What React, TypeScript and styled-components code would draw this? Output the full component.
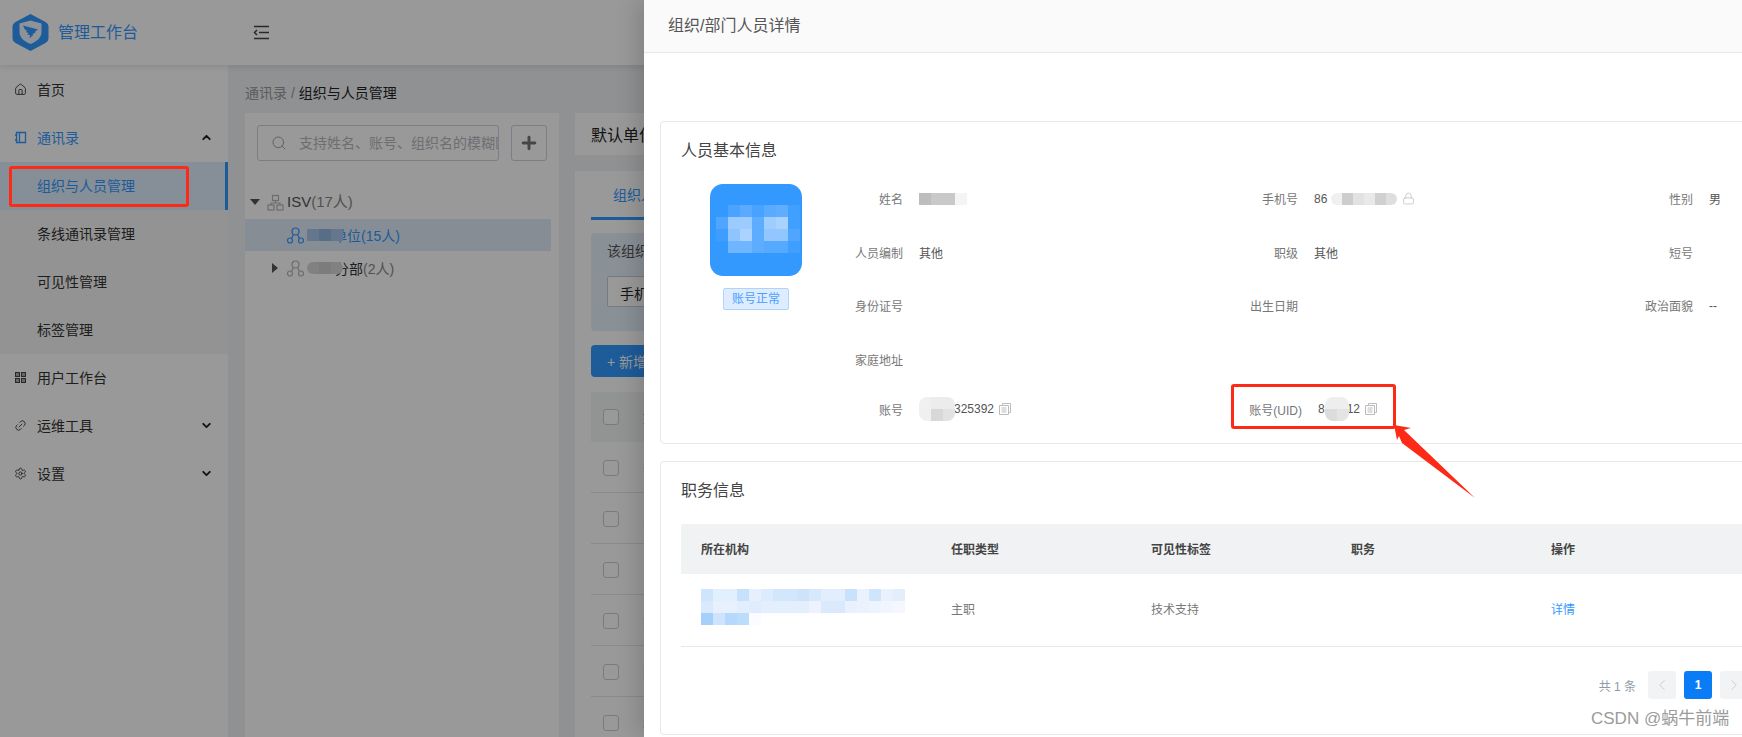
import React from 'react';
import styled, {createGlobalStyle} from 'styled-components';
import {ChevronDown, ChevronLeft, ChevronRight, ChevronUp, House, Link2, Lock, Plus, Search, Settings} from 'lucide-react';

const GlobalStyle = createGlobalStyle`
  html, body {
    margin: 0;
    padding: 0;
    background: #fff;
  }
  * {
    box-sizing: border-box;
  }
  body {
    font-family: "Liberation Sans", "Noto Sans CJK SC", sans-serif;
  }
`;

const BLUE = '#3399ff';

const Shot = styled.div`
  position: relative;
  width: 1742px;
  height: 737px;
  overflow: hidden;
  background: #fff;
`;

/* ---------- page behind the drawer ---------- */

const Page = styled.div`
  display: flex;
  flex-direction: column;
  height: 100%;
`;

const TopBar = styled.header`
  display: flex;
  align-items: center;
  flex: 0 0 65px;
  box-shadow: 0 2px 6px rgba(0, 0, 0, 0.1);
  background: #fff;
  position: relative;
  z-index: 1;
`;

const Brand = styled.div`
  display: flex;
  align-items: center;
  gap: 9px;
  width: 253px;
  padding-left: 12px;
  font-size: 16px;
  color: ${BLUE};
`;

const BrandName = styled.span`
  padding-bottom: 3px;
`;

const Shell = styled.div`
  display: flex;
  flex: 1;
  min-height: 0;
`;

const Side = styled.nav`
  width: 228px;
  flex: none;
  padding-top: 1px;
  background: #fff;
`;

const SubMenu = styled.div`
  background: #f6f6f6;
`;

const MenuItem = styled.div<{$active?: boolean; $sub?: boolean; $open?: boolean}>`
  display: flex;
  align-items: center;
  height: 48px;
  padding: 0 0 2px ${p => (p.$sub ? '37px' : '14px')};
  gap: 10px;
  font-size: 14px;
  color: ${p => (p.$active || p.$open ? BLUE : '#333')};
  background: ${p => (p.$active ? '#dfeefc' : 'transparent')};
  border-right: ${p => (p.$active ? `3px solid ${BLUE}` : '0')};
`;

const Caret = styled.span`
  margin-left: auto;
  margin-right: 15px;
  display: flex;
  color: #222;
`;

const Main = styled.main`
  flex: 1;
  min-width: 0;
  background: #f0f2f5;
  padding: 0 0 0 17px;
  display: flex;
  flex-direction: column;
`;

const Crumb = styled.div`
  flex: 0 0 48px;
  display: flex;
  align-items: center;
  padding-top: 6px;
  font-size: 14px;
  color: #999;

  b {
    font-weight: 400;
    color: #222;
  }
`;

const Columns = styled.div`
  flex: 1;
  display: flex;
  gap: 16px;
`;

const TreePanel = styled.section`
  width: 314px;
  flex: none;
  background: #fff;
`;

const SearchRow = styled.div`
  display: flex;
  gap: 12px;
  padding: 12px 12px 25px;
`;

const SearchBox = styled.div`
  display: flex;
  align-items: center;
  gap: 12px;
  width: 242px;
  height: 36px;
  padding-left: 13px;
  border: 1px solid #cfd3da;
  border-radius: 3px;
  overflow: hidden;
  color: #9aa5b1;
`;

const SearchInput = styled.input`
  flex: 1;
  min-width: 0;
  border: 0;
  padding: 0;
  outline: 0;
  background: transparent;
  font: 14px "Liberation Sans", "Noto Sans CJK SC", sans-serif;

  &::placeholder {
    color: #b5b9bf;
  }
`;

const AddButton = styled.div`
  display: flex;
  align-items: center;
  justify-content: center;
  width: 36px;
  height: 36px;
  border: 1px solid #cfd3da;
  border-radius: 3px;
  color: #777;
`;

const Tree = styled.div`
  display: flex;
  flex-direction: column;
  gap: 1px;
  padding-right: 8px;
`;

const TreeRow = styled.div<{$indent: number; $selected?: boolean}>`
  display: flex;
  align-items: center;
  height: 32px;
  padding-left: ${p => p.$indent}px;
  font-size: ${p => (p.$indent < 10 ? '15px' : '14px')};
  color: ${p => (p.$selected ? BLUE : p.$indent < 10 ? '#555' : '#333')};
  background: ${p => (p.$selected ? '#e0ebf9' : 'transparent')};

  em {
    font-style: normal;
    color: ${p => (p.$selected ? BLUE : '#888')};
  }
`;

const RootLabel = styled.span`
  padding-bottom: 3px;
`;

const Triangle = styled.span<{$open?: boolean}>`
  width: 0;
  height: 0;
  flex: none;
  ${p =>
    p.$open
      ? `border-left: 5px solid transparent; border-right: 5px solid transparent; border-top: 6px solid #555; margin: 0 7px 1px 0;`
      : `border-top: 5px solid transparent; border-bottom: 5px solid transparent; border-left: 6px solid #555; margin-right: 9px;`}
`;

const TreeIcon = styled.svg<{$on?: boolean}>`
  width: 17px;
  height: 17px;
  flex: none;
  margin-right: 3px;
  fill: none;
  stroke: ${p => (p.$on ? BLUE : '#b5b5b5')};
  stroke-width: 1.2;
`;

const RightColumn = styled.div`
  flex: 1;
  display: flex;
  flex-direction: column;
  gap: 16px;
  min-width: 0;
`;

const TitleCard = styled.div`
  height: 42px;
  display: flex;
  align-items: center;
  padding-left: 16px;
  font-size: 16px;
  color: #222;
  background: #fff;
`;

const ListCard = styled.div`
  flex: 1;
  padding: 0 0 0 16px;
  background: #fff;
`;

const Tabs = styled.div`
  height: 49px;
  border-bottom: 0;
`;

const Tab = styled.div`
  width: 100px;
  height: 49px;
  padding-top: 13px;
  text-align: center;
  font-size: 14px;
  color: ${BLUE};
  border-bottom: 3px solid ${BLUE};
  white-space: nowrap;
`;

const Notice = styled.div`
  margin-top: 13px;
  height: 98px;
  padding: 7px 16px;
  border-radius: 4px;
  background: #e4f0fb;
  font-size: 14px;
  color: #555;
  white-space: nowrap;
`;

const PhoneSelect = styled.div`
  margin-top: 16px;
  width: 120px;
  height: 31px;
  padding: 6px 12px;
  border: 1px solid #c9ccd1;
  border-radius: 2px;
  background: #fff;
  color: #222;
`;

const PrimaryButton = styled.div`
  display: flex;
  align-items: center;
  margin-top: 14px;
  width: 120px;
  height: 32px;
  padding-left: 16px;
  border-radius: 4px;
  background: ${BLUE};
  color: #fff;
  font-size: 14px;
  white-space: nowrap;
`;

const ListRow = styled.div<{$head?: boolean}>`
  display: flex;
  align-items: center;
  height: ${p => (p.$head ? '50px' : '51px')};
  margin-top: ${p => (p.$head ? '15px' : '0')};
  padding: ${p => (p.$head ? '0' : '2px')} 0 0 12px;
  gap: 24px;
  font-size: 14px;
  white-space: nowrap;
  color: ${p => (p.$head ? '#333' : BLUE)};
  background: ${p => (p.$head ? '#f4f5f6' : 'transparent')};
  border-bottom: ${p => (p.$head ? '0' : '1px solid #e6e8eb')};
`;

const Check = styled.span`
  width: 16px;
  height: 16px;
  flex: none;
  border: 1px solid #c9cdd4;
  border-radius: 3px;
  background: #fff;
`;

const Scrim = styled.div`
  position: absolute;
  inset: 0;
  z-index: 2;
  background: rgba(0, 0, 0, 0.4);
`;

/* ---------- drawer ---------- */

const Drawer = styled.aside`
  position: absolute;
  z-index: 3;
  top: 0;
  bottom: 0;
  left: 644px;
  width: 1098px;
  overflow: hidden;
  background: #fff;
  box-shadow: -6px 0 22px rgba(0, 0, 0, 0.16);
  color: #555;
`;

const DrawerHead = styled.div`
  display: flex;
  align-items: center;
  height: 53px;
  padding: 0 0 4px 24px;
  background: #fafafa;
  border-bottom: 1px solid #e8e8e8;
  font-size: 16px;
  color: #555;
`;

const DrawerBody = styled.div`
  display: flex;
  flex-direction: column;
  gap: 17px;
  width: 1108px;
  padding: 68px 0 0 16px;
`;

const Card = styled.section<{$h: number}>`
  width: 1092px;
  height: ${p => p.$h}px;
  padding: 20px 0 0 20px;
  border: 1px solid #e8e8e8;
  border-radius: 4px;
`;

const CardTitle = styled.h3`
  margin: 0;
  font-size: 16px;
  line-height: 18px;
  font-weight: 400;
  color: #444;
`;

const Profile = styled.div`
  display: flex;
  margin-top: 24px;
`;

const AvatarColumn = styled.div`
  display: flex;
  flex-direction: column;
  align-items: center;
  flex: none;
  width: 150px;
`;

const Avatar = styled.svg`
  width: 92px;
  height: 92px;
  display: block;
`;

const StatusTag = styled.span`
  margin-top: 12px;
  width: 66px;
  height: 22px;
  line-height: 20px;
  text-align: center;
  font-size: 12px;
  color: #4ba0ff;
  background: #deecff;
  border: 1px solid #aed4fb;
  border-radius: 2px;
`;

const Fields = styled.div`
  display: grid;
  flex: none;
  grid-template-columns: repeat(3, 395px);
  grid-template-rows: repeat(4, 53.5px) 46px;
  margin-top: -12px;
`;

const Field = styled.div`
  display: flex;
  align-items: center;
  font-size: 12px;
  color: #555;
`;

const Label = styled.span<{$shift?: number}>`
  width: ${p => 72 + (p.$shift || 0)}px;
  flex: none;
  text-align: right;
  color: #777;
  margin-right: 16px;
  white-space: nowrap;
`;

const Mosaic = styled.span<{$cols: number; $round?: boolean; $cell?: number}>`
  display: inline-grid;
  grid-template-columns: repeat(${p => p.$cols}, ${p => p.$cell || 12}px);
  grid-auto-rows: 12px;
  flex: none;
  overflow: hidden;
  border-radius: ${p => (p.$round ? '8px' : '0')};
`;

/* a blur that sits on top of the first characters following it */
const OverBlur = styled(Mosaic)<{$over: number}>`
  position: relative;
  z-index: 1;
  margin-right: -${p => p.$over}px;
`;

const OrgBlur = styled(Mosaic)`
  align-self: start;
  margin-top: 15px;
`;

const Cell = styled.span<{$c: string}>`
  background: ${p => p.$c};
`;

const CopyIcon = styled.svg`
  width: 12px;
  height: 12px;
  margin-left: 5px;
  flex: none;
  fill: none;
  stroke: #bcbcbc;
  stroke-width: 1;
`;

const Gap = styled.span`
  display: inline-block;
  width: 4px;
`;

const LockMark = styled.span`
  display: flex;
  margin-left: 5px;
  color: #c4c4c4;
`;

const JobTable = styled.div`
  margin-top: 24px;
  width: 1067px;
`;

const JobRow = styled.div<{$head?: boolean}>`
  display: grid;
  grid-template-columns: 250px 200px 200px 200px 1fr;
  align-items: center;
  height: ${p => (p.$head ? '50px' : '73px')};
  padding: 0 0 ${p => (p.$head ? '2px' : '3px')} 20px;
  font-size: 12px;
  font-weight: ${p => (p.$head ? 700 : 400)};
  color: ${p => (p.$head ? '#444' : '#777')};
  background: ${p => (p.$head ? '#f1f2f4' : '#fff')};
  border-bottom: ${p => (p.$head ? '0' : '1px solid #e8e8e8')};
  border-radius: ${p => (p.$head ? '2px 2px 0 0' : '0')};
`;

const Link = styled.span`
  color: ${BLUE};
`;

const Pager = styled.div`
  display: flex;
  align-items: center;
  justify-content: flex-end;
  gap: 8px;
  width: 1067px;
  margin-top: 24px;
  font-size: 12px;
  color: #8f99a8;
`;

const PagerTotal = styled.span`
  margin-right: 4px;
`;

const PageButton = styled.div<{$on?: boolean}>`
  display: flex;
  align-items: center;
  justify-content: center;
  width: 28px;
  height: 28px;
  border-radius: 3px;
  font-weight: 700;
  background: ${p => (p.$on ? '#0a7cf6' : '#f1f3f5')};
  color: ${p => (p.$on ? '#fff' : '#bcc3cd')};
`;

/* ---------- annotations on top of the screenshot ---------- */

const RedBox = styled.div<{$x: number; $y: number; $w: number; $h: number}>`
  position: absolute;
  z-index: 4;
  left: ${p => p.$x}px;
  top: ${p => p.$y}px;
  width: ${p => p.$w}px;
  height: ${p => p.$h}px;
  border: 3px solid #fc2a17;
  border-radius: 3px;
`;

const Arrow = styled.svg`
  position: absolute;
  z-index: 4;
  left: 1385px;
  top: 420px;
  width: 100px;
  height: 85px;
`;

const Watermark = styled.div`
  position: absolute;
  z-index: 4;
  left: 1591px;
  top: 709px;
  font-size: 17px;
  line-height: 20px;
  color: #9b9b9b;
  white-space: nowrap;
`;

const Logo = () => (
  <svg width="37" height="37" viewBox="0 0 37 37">
    <path d="M18.5 0 33.500 8q3 1.600 3 4.500v12q0 2.900-3 4.500l-15 8-15-8q-3-1.600-3-4.500v-12Q.5 9.600 3.500 8Z" fill="#3399ff" />
    <path d="M18.500 6.500 29.500 9.500v8.500c0 5.500-4.500 9.500-11 12-6.500-2.500-11-6.500-11-12V9.500Z" fill="#fff" opacity=".9" />
    <path d="M11 11.500 26 15.500l-3 2 1 .6-3.500 2.200.8.8-4 3.400 1-3.300-3.200-.6 1.600-1.600-3-1 1.500-1.300-2.400-1.200Z" fill="#3399ff" />
  </svg>
);

const Collapse = () => (
  <svg width="17" height="15" viewBox="0 0 17 15" fill="none" stroke="#444" strokeWidth="1.500">
    <path d="M1 1.500h15M6 7.500h10M1 13.500h15M4 5 1.500 7.500 4 10" />
  </svg>
);

const Contacts = () => (
  <svg width="13" height="13" viewBox="0 0 13 13" fill="none" stroke="#3399ff" strokeWidth="1.300">
    <path d="M2.500 1.500h9v10h-9zM5.500 1.500v10M1 4h2.500M1 9h2.500" />
  </svg>
);

const Apps = () => (
  <svg width="13" height="13" viewBox="0 0 13 13" fill="#aaa" stroke="#444" strokeWidth="1">
    <rect x="1.500" y="1.500" width="4" height="4" />
    <rect x="7.500" y="1.500" width="4" height="4" />
    <rect x="1.500" y="7.500" width="4" height="4" />
    <rect x="7.500" y="7.500" width="4" height="4" />
  </svg>
);

const OrgIcon = () => (
  <TreeIcon viewBox="0 0 17 17">
    <rect x="5.500" y="1.500" width="6" height="5" />
    <rect x="1" y="11" width="6" height="5" />
    <rect x="10" y="11" width="6" height="5" />
    <path d="M8.500 6.500v2.500M4 11V9h9v2" />
  </TreeIcon>
);

const NodeIcon = ({on}: {on?: boolean}) => (
  <TreeIcon viewBox="0 0 17 17" $on={on}>
    <circle cx="8.500" cy="4.500" r="3.500" />
    <circle cx="3" cy="13.500" r="2.500" />
    <circle cx="14" cy="13.500" r="2.500" />
    <path d="M6.500 7.500 4.500 11.500M10.500 7.500l2 4" />
  </TreeIcon>
);

const Copy = () => (
  <CopyIcon viewBox="0 0 12 12">
    <path d="M3.500 2.500V.5h8v9h-2M.5 2.500h9v9h-9zM2.500 5h5M2.500 7h5M2.500 9h5" />
  </CopyIcon>
);

const avatarCells = [
  ['#3399ff', '#4aa3ff', '#5aabff', '#48a2ff', '#5aabff', '#5fadff', '#3fa0ff'],
  ['#50a6ff', '#9ccbff', '#9ccbff', '#5dadff', '#9fcdff', '#aad2ff', '#40a0ff'],
  ['#3d9eff', '#8fc4ff', '#aad3ff', '#5dadff', '#92c6ff', '#92c6ff', '#50a6ff'],
  ['#3399ff', '#70b5ff', '#70b5ff', '#5dadff', '#55a9ff', '#55a9ff', '#3f9fff'],
];

const orgCells = [
  ['#cfe5fc', '#e2effd', '#e2effd', '#c6e1fb', '#e6f0fd', '#dcebfd', '#d2e6fc', '#d2e6fc', '#cde3fc', '#d6e8fc', '#e2eefd', '#e2eefd', '#c8e2fc', '#e9f2fe', '#cfe5fc', '#eaf1fe', '#e3eefd'],
  ['#dbe9fc', '#e8f0fd', '#e8f0fd', '#e2edfd', '#e0ecfd', '#e4effd', '#e4effd', '#e4effd', '#e4effd', '#edf2fe', '#dbe9fc', '#dbe9fc', '#e9f1fe', '#eaf2fe', '#eef4fe', '#f0f5fe', '#f4f7fe'],
  ['#a5d0fb', '#cfe4fc', '#b5d8fc', '#bcdcfc', '#fbfcff'],
];

const App: React.FC = () => {
  return (
    <Shot>
      <GlobalStyle />
      <Page>
        <TopBar>
          <Brand>
            <Logo />
            <BrandName>管理工作台</BrandName>
          </Brand>
          <Collapse />
        </TopBar>
        <Shell>
          <Side>
            <MenuItem>
              <House size={13} strokeWidth={1.6} />
              首页
            </MenuItem>
            <MenuItem $open>
              <Contacts />
              通讯录
              <Caret>
                <ChevronUp size={13} strokeWidth={3.500} />
              </Caret>
            </MenuItem>
            <SubMenu>
              <MenuItem $sub $active>组织与人员管理</MenuItem>
              <MenuItem $sub>条线通讯录管理</MenuItem>
              <MenuItem $sub>可见性管理</MenuItem>
              <MenuItem $sub>标签管理</MenuItem>
            </SubMenu>
            <MenuItem>
              <Apps />
              用户工作台
            </MenuItem>
            <MenuItem>
              <Link2 size={13} strokeWidth={1.500} style={{transform: 'rotate(-45deg)'}} />
              运维工具
              <Caret>
                <ChevronDown size={13} strokeWidth={3.500} />
              </Caret>
            </MenuItem>
            <MenuItem>
              <Settings size={13} strokeWidth={1.600} />
              设置
              <Caret>
                <ChevronDown size={13} strokeWidth={3.500} />
              </Caret>
            </MenuItem>
          </Side>
          <Main>
            <Crumb>
              通讯录&nbsp;/&nbsp;<b>组织与人员管理</b>
            </Crumb>
            <Columns>
              <TreePanel>
                <SearchRow>
                  <SearchBox>
                    <Search size={16} strokeWidth={1.500} />
                    <SearchInput readOnly placeholder="支持姓名、账号、组织名的模糊匹配" />
                  </SearchBox>
                  <AddButton>
                    <Plus size={20} strokeWidth={3.500} />
                  </AddButton>
                </SearchRow>
                <Tree>
                  <TreeRow $indent={5}>
                    <Triangle $open />
                    <OrgIcon />
                    <RootLabel>
                      ISV<em>(17人)</em>
                    </RootLabel>
                  </TreeRow>
                  <TreeRow $indent={42} $selected>
                    <NodeIcon on />
                    <OverBlur $cols={3} $over={10}>
                      <Cell $c="#a9c7ea" />
                      <Cell $c="#93b7e0" />
                      <Cell $c="#a9c7ea" />
                    </OverBlur>
                    单位<em>(15人)</em>
                  </TreeRow>
                  <TreeRow $indent={27}>
                    <Triangle />
                    <NodeIcon />
                    <OverBlur $cols={3} $round $over={8}>
                      <Cell $c="#d8d8d8" />
                      <Cell $c="#cfcfcf" />
                      <Cell $c="#d8d8d8" />
                    </OverBlur>
                    分部<em>(2人)</em>
                  </TreeRow>
                </Tree>
              </TreePanel>
              <RightColumn>
                <TitleCard>默认单位</TitleCard>
                <ListCard>
                  <Tabs>
                    <Tab>组织人员</Tab>
                  </Tabs>
                  <Notice>
                    该组织下人员
                    <PhoneSelect>手机号</PhoneSelect>
                  </Notice>
                  <PrimaryButton>+ 新增人员</PrimaryButton>
                  <ListRow $head>
                    <Check />
                    姓名
                  </ListRow>
                  {['李', '王', '张', '刘', '陈', '杨'].map(n => (
                    <ListRow key={n}>
                      <Check />
                      {n}
                    </ListRow>
                  ))}
                </ListCard>
              </RightColumn>
            </Columns>
          </Main>
        </Shell>
      </Page>
      <Scrim />
      <Drawer>
        <DrawerHead>组织/部门人员详情</DrawerHead>
        <DrawerBody>
          <Card $h={323}>
            <CardTitle>人员基本信息</CardTitle>
            <Profile>
              <AvatarColumn>
                <Avatar viewBox="0 0 92 92">
                  <rect width="92" height="92" rx="13" fill="#3399ff" />
                  {avatarCells.map((row, y) =>
                    row.map((c, x) => <rect key={`${x}-${y}`} x={6 + x * 12} y={21 + y * 12} width="12" height="12" fill={c} />),
                  )}
                </Avatar>
                <StatusTag>账号正常</StatusTag>
              </AvatarColumn>
              <Fields>
                <Field>
                  <Label>姓名</Label>
                  <Mosaic $cols={4}>
                    <Cell $c="#bdbdbd" />
                    <Cell $c="#c9c9c9" />
                    <Cell $c="#c9c9c9" />
                    <Cell $c="#f4f4f4" />
                  </Mosaic>
                </Field>
                <Field>
                  <Label>手机号</Label>
                  86
                  <Gap />
                  <Mosaic $cols={6} $cell={11} $round>
                    <Cell $c="#f0f0f0" />
                    <Cell $c="#cdcdcd" />
                    <Cell $c="#e2e2e2" />
                    <Cell $c="#e9e9e9" />
                    <Cell $c="#d0d0d0" />
                    <Cell $c="#dedede" />
                  </Mosaic>
                  <LockMark>
                    <Lock size={13} strokeWidth={1.500} />
                  </LockMark>
                </Field>
                <Field>
                  <Label>性别</Label>男
                </Field>
                <Field>
                  <Label>人员编制</Label>其他
                </Field>
                <Field>
                  <Label>职级</Label>其他
                </Field>
                <Field>
                  <Label>短号</Label>
                </Field>
                <Field>
                  <Label>身份证号</Label>
                </Field>
                <Field>
                  <Label>出生日期</Label>
                </Field>
                <Field>
                  <Label>政治面貌</Label>--
                </Field>
                <Field>
                  <Label>家庭地址</Label>
                </Field>
                <Field />
                <Field />
                <Field>
                  <Label>账号</Label>
                  <OverBlur $cols={3} $round $over={1}>
                    <Cell $c="#f0f0f0" />
                    <Cell $c="#ececec" />
                    <Cell $c="#ececec" />
                    <Cell $c="#f0f0f0" />
                    <Cell $c="#d8d8d8" />
                    <Cell $c="#e2e2e2" />
                  </OverBlur>
                  325392
                  <Copy />
                </Field>
                <Field>
                  <Label $shift={4}>账号(UID)</Label>8
                  <OverBlur $cols={2} $round $over={2}>
                    <Cell $c="#eeeeee" />
                    <Cell $c="#eeeeee" />
                    <Cell $c="#dcdcdc" />
                    <Cell $c="#e4e4e4" />
                  </OverBlur>
                  12
                  <Copy />
                </Field>
              </Fields>
            </Profile>
          </Card>
          <Card $h={274}>
            <CardTitle>职务信息</CardTitle>
            <JobTable>
              <JobRow $head>
                <span>所在机构</span>
                <span>任职类型</span>
                <span>可见性标签</span>
                <span>职务</span>
                <span>操作</span>
              </JobRow>
              <JobRow>
                <OrgBlur $cols={17}>
                  {orgCells.flat().map((c, i) => (
                    <Cell key={i} $c={c} />
                  ))}
                </OrgBlur>
                <span>主职</span>
                <span>技术支持</span>
                <span />
                <Link>详情</Link>
              </JobRow>
            </JobTable>
            <Pager>
              <PagerTotal>共 1 条</PagerTotal>
              <PageButton>
                <ChevronLeft size={18} strokeWidth={1} />
              </PageButton>
              <PageButton $on>1</PageButton>
              <PageButton>
                <ChevronRight size={18} strokeWidth={1} />
              </PageButton>
            </Pager>
          </Card>
        </DrawerBody>
      </Drawer>
      <RedBox $x={9} $y={166} $w={180} $h={41} />
      <RedBox $x={1231} $y={384} $w={165} $h={45} />
      <Arrow viewBox="1385 420 100 85">
        <polygon points="1394,425 1411,428 1404,430 1475,498 1402,443 1399,436 1397,440" fill="#fc2a17" />
      </Arrow>
      <Watermark>CSDN @蜗牛前端</Watermark>
    </Shot>
  );
};

export default App;
